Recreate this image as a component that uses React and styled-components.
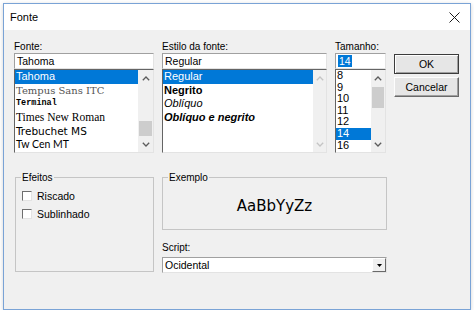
import React from "react";
import styled, { createGlobalStyle } from "styled-components";

const GlobalStyle = createGlobalStyle`
  html, body {
    margin: 0;
    background: #ffffff;
  }
  body {
    font-family: "Liberation Sans", Arial, sans-serif;
    font-size: 10px;
    color: #000;
  }
`;

const FONT_LIST = [
  { name: "Tahoma", family: '"Liberation Sans", sans-serif', selected: true },
  { name: "Tempus Sans ITC", family: '"DejaVu Serif", serif', color: "#555", size: 10 },
  { name: "Terminal", family: '"Liberation Mono", monospace', size: 8.5, weight: 700 },
  { name: "Times New Roman", family: '"Liberation Serif", serif', size: 11.5 },
  { name: "Trebuchet MS", family: '"DejaVu Sans", sans-serif', size: 10.5 },
  { name: "Tw Cen MT", family: '"Lato", sans-serif', size: 10.5 },
];

const STYLE_LIST = [
  { name: "Regular", selected: true },
  { name: "Negrito", weight: 700 },
  { name: "Oblíquo", italic: true },
  { name: "Oblíquo e negrito", weight: 700, italic: true },
];

const SIZE_LIST = ["8", "9", "10", "11", "12", "14", "16"];

const Chevron = ({ down, light }) => (
  <svg width="8" height="5" viewBox="0 0 8 5">
    <path
      d={down ? "M0.8 0.8 L4 4 L7.2 0.8" : "M0.8 4.2 L4 1 L7.2 4.2"}
      fill="none"
      stroke={light ? "#c4c4c4" : "#5c5c5c"}
      strokeWidth="1.3"
    />
  </svg>
);

function ScrollBar({ width, thumbTop, thumbHeight, disabled }) {
  return (
    <ScrollTrack $width={width}>
      <ScrollArrow>
        <Chevron light={disabled} />
      </ScrollArrow>
      <ThumbArea>{!disabled && <Thumb $top={thumbTop} $height={thumbHeight} />}</ThumbArea>
      <ScrollArrow>
        <Chevron down light={disabled} />
      </ScrollArrow>
    </ScrollTrack>
  );
}

export default function App() {
  return (
    <>
      <GlobalStyle />
      <Window>
        <TitleBar>
          <Title>Fonte</Title>
          <CloseButton>
            <svg width="11" height="11" viewBox="0 0 11 11">
              <path d="M0.5 0.5 L10.5 10.5 M10.5 0.5 L0.5 10.5" stroke="#1a1a1a" strokeWidth="1" />
            </svg>
          </CloseButton>
        </TitleBar>

        <Body>
          <TopRow>
            <Column>
              <FieldLabel>Fonte:</FieldLabel>
              <TextBox>Tahoma</TextBox>
              <ListBox>
                <ListItems>
                  {FONT_LIST.map((f) => (
                    <ListItem
                      key={f.name}
                      $selected={f.selected}
                      $family={f.family}
                      $size={f.size}
                      $weight={f.weight}
                      $color={f.color}
                    >
                      {f.name}
                    </ListItem>
                  ))}
                </ListItems>
                <ScrollBar width={15} thumbTop={35} thumbHeight={15} />
              </ListBox>
            </Column>

            <Column>
              <FieldLabel>Estilo da fonte:</FieldLabel>
              <TextBox>Regular</TextBox>
              <ListBox>
                <ListItems>
                  {STYLE_LIST.map((s) => (
                    <ListItem key={s.name} $selected={s.selected} $weight={s.weight} $italic={s.italic}>
                      {s.name}
                    </ListItem>
                  ))}
                </ListItems>
                <ScrollBar width={13} disabled />
              </ListBox>
            </Column>

            <Column>
              <FieldLabel>Tamanho:</FieldLabel>
              <TextBox>
                <Selection>14</Selection>
              </TextBox>
              <ListBox>
                <ListItems>
                  {SIZE_LIST.map((s) => (
                    <SizeItem key={s} $selected={s === "14"}>
                      {s}
                    </SizeItem>
                  ))}
                </ListItems>
                <ScrollBar width={14} thumbTop={1} thumbHeight={21} />
              </ListBox>
            </Column>

            <ButtonColumn>
              <DialogButton $isDefault>OK</DialogButton>
              <DialogButton>Cancelar</DialogButton>
            </ButtonColumn>
          </TopRow>

          <BottomRow>
            <GroupBox $height={101} $left={1}>
              <GroupLegend>Efeitos</GroupLegend>
              <CheckList>
                <CheckRow>
                  <CheckBox />
                  Riscado
                </CheckRow>
                <CheckRow>
                  <CheckBox />
                  Sublinhado
                </CheckRow>
              </CheckList>
            </GroupBox>

            <RightStack>
              <GroupBox $height={59}>
                <GroupLegend>Exemplo</GroupLegend>
                <SampleArea>AaBbYyZz</SampleArea>
              </GroupBox>
              <ScriptLabel>Script:</ScriptLabel>
              <ComboBox>
                <ComboValue>Ocidental</ComboValue>
                <ComboArrow>
                  <svg width="5" height="3" viewBox="0 0 5 3">
                    <path d="M0 0 H5 L2.5 3 Z" fill="#000" />
                  </svg>
                </ComboArrow>
              </ComboBox>
            </RightStack>
          </BottomRow>
        </Body>
      </Window>
    </>
  );
}

const Window = styled.div`
  margin: 3px 0 0 3px;
  width: 468px;
  height: 307px;
  box-sizing: border-box;
  border: 1px solid #7aa3d6;
  box-shadow: 0 1px 4px rgba(0, 0, 0, 0.18);
  display: flex;
  flex-direction: column;
  background: #f0f0f0;
`;

const TitleBar = styled.div`
  height: 26px;
  flex: none;
  background: #ffffff;
  display: flex;
  align-items: center;
  justify-content: space-between;
  padding: 0 8px 0 6px;
`;

const Title = styled.span`
  font-family: "Liberation Sans", Arial, sans-serif;
  font-size: 11px;
  color: #000;
`;

const CloseButton = styled.span`
  display: flex;
  align-items: center;
  padding-right: 2px;
`;

const Body = styled.div`
  flex: 1;
  padding: 10px 0 0 10px;
  display: flex;
  flex-direction: column;
  gap: 18px;
`;

const TopRow = styled.div`
  display: grid;
  grid-template-columns: 140px 165px 51px 65px;
  column-gap: 8px;
`;

const Column = styled.div`
  display: flex;
  flex-direction: column;
`;

const FieldLabel = styled.div`
  height: 13px;
  line-height: 13px;
  font-size: 10px;
  white-space: nowrap;
`;

const TextBox = styled.div`
  height: 16px;
  box-sizing: border-box;
  background: #fff;
  border: 1px solid;
  border-color: #a0a0a0 #e3e3e3 #e3e3e3 #a0a0a0;
  font-size: 10.5px;
  line-height: 14px;
  padding-left: 2px;
  white-space: nowrap;
  overflow: hidden;
`;

const Selection = styled.span`
  background: #0078d7;
  color: #fff;
  padding: 0 1px;
`;

const ListBox = styled.div`
  height: 84px;
  box-sizing: border-box;
  background: #fff;
  border: 1px solid;
  border-color: #646464 #e3e3e3 #e3e3e3 #646464;
  display: flex;
`;

const ListItems = styled.div`
  flex: 1;
  min-width: 0;
  overflow: hidden;
`;

const ListItem = styled.div`
  height: 13.7px;
  line-height: 13.7px;
  padding-left: 1px;
  white-space: nowrap;
  overflow: hidden;
  font-family: ${({ $family }) => $family || '"Liberation Sans", Arial, sans-serif'};
  font-size: ${({ $size }) => $size || 11}px;
  font-weight: ${({ $weight }) => $weight || 400};
  font-style: ${({ $italic }) => ($italic ? "italic" : "normal")};
  color: ${({ $selected, $color }) => ($selected ? "#fff" : $color || "#000")};
  background: ${({ $selected }) => ($selected ? "#0078d7" : "transparent")};
`;

const SizeItem = styled.div`
  height: 11.6px;
  line-height: 11.6px;
  padding-left: 1px;
  font-size: 11px;
  color: ${({ $selected }) => ($selected ? "#fff" : "#000")};
  background: ${({ $selected }) => ($selected ? "#0078d7" : "transparent")};
`;

const ScrollTrack = styled.div`
  width: ${({ $width }) => $width}px;
  flex: none;
  background: #f0f0f0;
  display: flex;
  flex-direction: column;
`;

const ScrollArrow = styled.div`
  height: 16px;
  flex: none;
  display: flex;
  align-items: center;
  justify-content: center;
`;

const ThumbArea = styled.div`
  flex: 1;
  display: flex;
  flex-direction: column;
  align-items: center;
`;

const Thumb = styled.div`
  margin-top: ${({ $top }) => $top}px;
  height: ${({ $height }) => $height}px;
  width: calc(100% - 2px);
  background: #cdcdcd;
`;

const ButtonColumn = styled.div`
  display: flex;
  flex-direction: column;
  gap: 3px;
  padding-top: 14px;
`;

const DialogButton = styled.div`
  height: 20px;
  box-sizing: border-box;
  display: flex;
  align-items: center;
  justify-content: center;
  font-size: 10.5px;
  background: #e6e6e6;
  border: 1px solid;
  border-color: ${({ $isDefault }) => ($isDefault ? "#3c3c3c" : "#fdfdfd #6a6a6a #6a6a6a #fdfdfd")};
  box-shadow: ${({ $isDefault }) =>
    $isDefault ? "inset 1px 1px #fff, inset -1px -1px #a0a0a0" : "inset -1px -1px #a0a0a0"};
`;

const BottomRow = styled.div`
  display: grid;
  grid-template-columns: 140px 225px;
  column-gap: 8px;
`;

const GroupBox = styled.fieldset`
  margin: 0 0 0 ${({ $left }) => $left || 0}px;
  padding: 0;
  height: ${({ $height }) => $height}px;
  box-sizing: border-box;
  border: 1px solid #c5c5c5;
  min-width: 0;
`;

const GroupLegend = styled.legend`
  font-size: 10px;
  line-height: 13px;
  padding: 0 1px;
  margin-left: 5px;
`;

const CheckList = styled.div`
  display: flex;
  flex-direction: column;
  gap: 5px;
  padding: 5px 0 0 6px;
`;

const CheckRow = styled.div`
  display: flex;
  align-items: center;
  gap: 5px;
  height: 13px;
  font-size: 10.5px;
`;

const CheckBox = styled.span`
  width: 10px;
  height: 10px;
  box-sizing: border-box;
  background: #fff;
  border: 1px solid;
  border-color: #6e6e6e #e3e3e3 #e3e3e3 #6e6e6e;
`;

const RightStack = styled.div`
  display: flex;
  flex-direction: column;
`;

const SampleArea = styled.div`
  height: 44px;
  display: flex;
  align-items: center;
  justify-content: center;
  font-family: "DejaVu Sans", Verdana, sans-serif;
  font-size: 15px;
`;

const ScriptLabel = styled.div`
  margin-top: 11px;
  height: 13px;
  line-height: 13px;
  font-size: 10px;
`;

const ComboBox = styled.div`
  margin-top: 3px;
  height: 16px;
  box-sizing: border-box;
  background: #fff;
  border: 1px solid;
  border-color: #a0a0a0 #e3e3e3 #e3e3e3 #a0a0a0;
  display: flex;
  align-items: stretch;
`;

const ComboValue = styled.div`
  flex: 1;
  font-size: 10.5px;
  line-height: 14px;
  padding-left: 2px;
`;

const ComboArrow = styled.div`
  width: 14px;
  box-sizing: border-box;
  background: #f0f0f0;
  border: 1px solid;
  border-color: #fff #696969 #696969 #fff;
  display: flex;
  align-items: center;
  justify-content: center;
`;
